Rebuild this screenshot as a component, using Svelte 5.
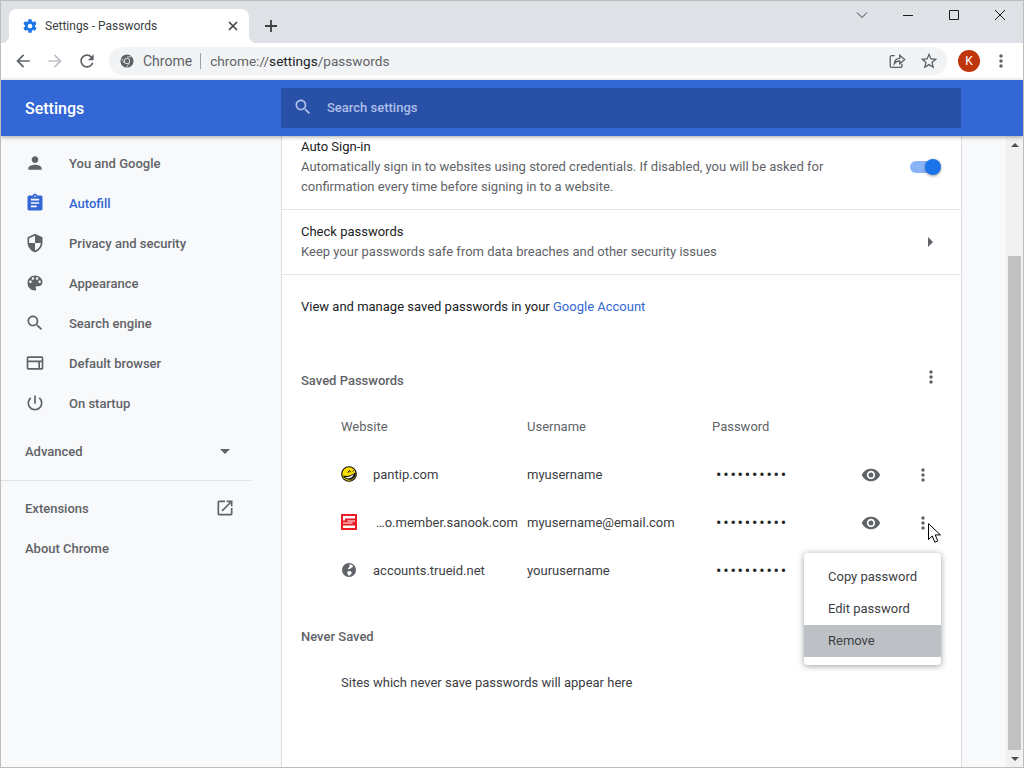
<script>
  const icons = {
    person: 'M12 12c2.21 0 4-1.79 4-4s-1.79-4-4-4-4 1.79-4 4 1.79 4 4 4zm0 2c-2.67 0-8 1.34-8 4v2h16v-2c0-2.66-5.33-4-8-4z',
    autofill: 'M19 3h-4.18C14.4 1.84 13.3 1 12 1c-1.3 0-2.4.84-2.82 2H5c-1.1 0-2 .9-2 2v14c0 1.1.9 2 2 2h14c1.1 0 2-.9 2-2V5c0-1.1-.9-2-2-2zm-7 0c.55 0 1 .45 1 1s-.45 1-1 1-1-.45-1-1 .45-1 1-1zm2 14H7v-2h7v2zm3-4H7v-2h10v2zm0-4H7V7h10v2z',
    shield: 'M12 1L3 5v6c0 5.55 3.84 10.74 9 12 5.16-1.26 9-6.45 9-12V5l-9-4zm0 10.99h7c-.53 4.12-3.28 7.79-7 8.94V12H5V6.3l7-3.11v8.8z',
    palette: 'M12 3c-4.97 0-9 4.03-9 9s4.03 9 9 9c.83 0 1.5-.67 1.5-1.5 0-.39-.15-.74-.39-1.01-.23-.26-.38-.61-.38-.99 0-.83.67-1.5 1.5-1.5H16c2.76 0 5-2.24 5-5 0-4.42-4.03-8-9-8zm-5.5 9c-.83 0-1.5-.67-1.5-1.5S5.67 9 6.5 9 8 9.67 8 10.5 7.33 12 6.5 12zm3-4C8.67 8 8 7.33 8 6.5S8.67 5 9.5 5s1.5.67 1.5 1.5S10.33 8 9.5 8zm5 0c-.83 0-1.5-.67-1.5-1.5S13.67 5 14.5 5s1.5.67 1.5 1.5S15.33 8 14.5 8zm3 4c-.83 0-1.5-.67-1.5-1.5S16.67 9 17.5 9s1.5.67 1.5 1.5-.67 1.5-1.5 1.5z',
    search: 'M15.5 14h-.79l-.28-.27C15.41 12.59 16 11.11 16 9.5 16 5.91 13.09 3 9.5 3S3 5.91 3 9.5 5.91 16 9.5 16c1.61 0 3.09-.59 4.23-1.57l.27.28v.79l5 4.99L20.49 19l-4.99-5zm-6 0C7.01 14 5 11.99 5 9.5S7.01 5 9.5 5 14 7.01 14 9.5 11.99 14 9.5 14z',
    browser: 'M20 4H4c-1.1 0-2 .9-2 2v12c0 1.1.9 2 2 2h16c1.1 0 2-.9 2-2V6c0-1.1-.9-2-2-2zM4 18v-7h12v7H4zm16 0h-2v-7h2v7zm0-9H4V6h16v3z',
    power: 'M13 3h-2v10h2V3zm4.83 2.17l-1.42 1.42C17.99 7.86 19 9.81 19 12c0 3.87-3.13 7-7 7s-7-3.13-7-7c0-2.19 1.01-4.14 2.58-5.42L6.17 5.17C4.23 6.82 3 9.26 3 12c0 4.97 4.03 9 9 9s9-4.03 9-9c0-2.74-1.23-5.18-3.17-6.83z',
    external: 'M19 19H5V5h7V3H5c-1.11 0-2 .9-2 2v14c0 1.1.89 2 2 2h14c1.1 0 2-.9 2-2v-7h-2v7zM14 3v2h3.59l-9.83 9.83 1.41 1.41L19 6.41V10h2V3h-7z',
    eye: 'M12 4.5C7 4.5 2.73 7.61 1 12c1.73 4.39 6 7.5 11 7.5s9.27-3.11 11-7.5c-1.73-4.39-6-7.5-11-7.5zM12 17c-2.76 0-5-2.24-5-5s2.24-5 5-5 5 2.24 5 5-2.24 5-5 5zm0-8c-1.66 0-3 1.34-3 3s1.34 3 3 3 3-1.34 3-3-1.34-3-3-3z',
    more: 'M12 8c1.1 0 2-.9 2-2s-.9-2-2-2-2 .9-2 2 .9 2 2 2zm0 2c-1.1 0-2 .9-2 2s.9 2 2 2 2-.9 2-2-.9-2-2-2zm0 6c-1.1 0-2 .9-2 2s.9 2 2 2 2-.9 2-2-.9-2-2-2z',
    gear: 'M19.43 12.98c.04-.32.07-.64.07-.98s-.03-.66-.07-.98l2.11-1.65c.19-.15.24-.42.12-.64l-2-3.46c-.12-.22-.39-.3-.61-.22l-2.49 1c-.52-.4-1.08-.73-1.69-.98l-.38-2.65C14.46 2.18 14.25 2 14 2h-4c-.25 0-.46.18-.49.42l-.38 2.65c-.61.25-1.17.59-1.69.98l-2.49-1c-.23-.09-.49 0-.61.22l-2 3.46c-.13.22-.07.49.12.64l2.11 1.65c-.04.32-.07.65-.07.98s.03.66.07.98l-2.11 1.65c-.19.15-.24.42-.12.64l2 3.46c.12.22.39.3.61.22l2.49-1c.52.4 1.08.73 1.69.98l.38 2.65c.03.24.24.42.49.42h4c.25 0 .46-.18.49-.42l.38-2.65c.61-.25 1.17-.59 1.69-.98l2.49 1c.23.09.49 0 .61-.22l2-3.46c.12-.22.07-.49-.12-.64l-2.11-1.65zM12 15.5c-1.93 0-3.5-1.57-3.5-3.5s1.57-3.5 3.5-3.5 3.5 1.57 3.5 3.5-1.57 3.5-3.5 3.5z',
    star: 'M22 9.24l-7.19-.62L12 2 9.19 8.63 2 9.24l5.46 4.73L5.82 21 12 17.27 18.18 21l-1.63-7.03L22 9.24zM12 15.4l-3.76 2.27 1-4.28-3.32-2.88 4.38-.38L12 6.1l1.71 4.04 4.38.38-3.32 2.88 1 4.28L12 15.4z'
  };

  const navItems = [
    { label: 'You and Google', icon: 'person' },
    { label: 'Autofill', icon: 'autofill', active: true },
    { label: 'Privacy and security', icon: 'shield' },
    { label: 'Appearance', icon: 'palette' },
    { label: 'Search engine', icon: 'search' },
    { label: 'Default browser', icon: 'browser' },
    { label: 'On startup', icon: 'power' }
  ];

  const passwords = [
    { site: 'pantip.com', user: 'myusername', favicon: 'smile', eye: true, more: true },
    { site: '…o.member.sanook.com', user: 'myusername@email.com', favicon: 'sanook', eye: true, more: true },
    { site: 'accounts.trueid.net', user: 'yourusername', favicon: 'globe' }
  ];
</script>

<div class="window">
  <div class="tabstrip">
    <div class="tab">
      <svg class="tab-icon" viewBox="0 0 24 24" width="16" height="16"><path d={icons.gear} /></svg>
      <span class="tab-title">Settings - Passwords</span>
      <svg class="tab-close" viewBox="0 0 10 10" width="10" height="10"><path d="M1 1l8 8M9 1l-8 8" /></svg>
    </div>
    <svg class="new-tab" viewBox="0 0 14 14" width="14" height="14"><path d="M7 1v12M1 7h12" /></svg>
    <div class="win-controls">
      <div class="win-btn"><svg viewBox="0 0 12 12" width="12" height="12"><path d="M1 3.500l5 5 5-5" /></svg></div>
      <div class="win-btn"><svg viewBox="0 0 12 12" width="12" height="12"><path d="M1 6.500h10" /></svg></div>
      <div class="win-btn"><svg viewBox="0 0 12 12" width="12" height="12"><path d="M1.500 1.500h9v9h-9z" /></svg></div>
      <div class="win-btn"><svg viewBox="0 0 12 12" width="12" height="12"><path d="M1 1l10 10M11 1L1 11" /></svg></div>
    </div>
  </div>

  <div class="toolbar">
    <div class="tool"><svg viewBox="0 0 24 24" width="20" height="20"><path class="gfill" d="M20 11H7.830l5.590-5.590L12 4l-8 8 8 8 1.410-1.410L7.830 13H20v-2z" /></svg></div>
    <div class="tool"><svg viewBox="0 0 24 24" width="20" height="20"><path class="dim" d="M4 11h12.170l-5.590-5.590L12 4l8 8-8 8-1.410-1.410L16.170 13H4v-2z" /></svg></div>
    <div class="tool"><svg viewBox="0 0 24 24" width="20" height="20"><path class="gfill" d="M17.650 6.350C16.200 4.900 14.210 4 12 4c-4.420 0-7.990 3.580-7.990 8s3.570 8 7.990 8c3.730 0 6.840-2.550 7.730-6h-2.080c-.82 2.330-3.040 4-5.650 4-3.310 0-6-2.690-6-6s2.690-6 6-6c1.660 0 3.140.69 4.220 1.780L13 11h7V4l-2.350 2.350z" /></svg></div>
    <div class="omnibox">
      <svg class="chrome-logo" viewBox="0 0 16 16" width="14" height="14">
        <circle cx="8" cy="8" r="7.500" fill="#5f6368" />
        <path d="M8 3.200h6.200M5 10.500L2 5.200M10.600 10L7.600 15" stroke="#f1f3f4" stroke-width="0.8" fill="none" />
        <circle cx="8" cy="8" r="3.400" fill="#f1f3f4" />
        <circle cx="8" cy="8" r="2.500" fill="#5f6368" />
      </svg>
      <span class="origin">Chrome</span>
      <span class="sep"></span>
      <span class="url">chrome://<b>settings</b>/passwords</span>
      <div class="omni-tool first">
        <svg viewBox="0 0 20 20" width="18" height="18" fill="none" stroke="#5f6368" stroke-width="1.500">
          <path d="M7.500 4H4A1.500 1.500 0 0 0 2.500 5.500v10A1.500 1.500 0 0 0 4 17h10a1.500 1.500 0 0 0 1.500-1.500V13" />
          <path d="M7 13c.3-3.600 2.700-6 6-6V3.600L18.500 8.400 13 13.200V10c-2.600 0-4.600 1-6 3z" />
        </svg>
      </div>
      <div class="omni-tool"><svg viewBox="0 0 24 24" width="20" height="20"><path class="gfill" d={icons.star} /></svg></div>
    </div>
    <div class="avatar">K</div>
    <div class="tool menu-tool"><svg viewBox="0 0 24 24" width="20" height="20"><path class="gfill" d={icons.more} /></svg></div>
  </div>

  <header class="bluebar">
    <h1>Settings</h1>
    <div class="searchbox">
      <svg viewBox="0 0 24 24" width="20" height="20"><path d={icons.search} /></svg>
      <span>Search settings</span>
    </div>
  </header>

  <div class="page">
    <nav class="sidebar">
      {#each navItems as item}
        <div class="nav-item" class:active={item.active}>
          <svg viewBox="0 0 24 24" width="20" height="20"><path d={icons[item.icon]} /></svg>
          <span>{item.label}</span>
        </div>
      {/each}
      <div class="nav-plain advanced">
        <span>Advanced</span>
        <svg class="caret" viewBox="0 0 10 5" width="10" height="5"><path d="M0 0h10L5 5z" /></svg>
      </div>
      <div class="nav-divider"></div>
      <div class="nav-plain">
        <span>Extensions</span>
        <svg viewBox="0 0 24 24" width="20" height="20"><path d={icons.external} /></svg>
      </div>
      <div class="nav-plain"><span>About Chrome</span></div>
    </nav>

    <main class="card">
      <section class="setting signin">
        <div>
          <div class="setting-title">Auto Sign-in</div>
          <div class="setting-sub">Automatically sign in to websites using stored credentials. If disabled, you will be asked for<br />confirmation every time before signing in to a website.</div>
        </div>
        <div class="toggle"><span class="knob"></span></div>
      </section>

      <section class="setting check">
        <div>
          <div class="setting-title">Check passwords</div>
          <div class="setting-sub">Keep your passwords safe from data breaches and other security issues</div>
        </div>
        <svg class="chevron" viewBox="0 0 5 10" width="5" height="10"><path d="M0 0l5 5-5 5z" /></svg>
      </section>

      <p class="manage">View and manage saved passwords in your <a href="#top">Google Account</a></p>

      <div class="saved-head">
        <h2>Saved Passwords</h2>
        <svg viewBox="0 0 24 24" width="20" height="20"><path d={icons.more} /></svg>
      </div>

      <div class="pw-row pw-header">
        <span>Website</span>
        <span>Username</span>
        <span>Password</span>
      </div>
      {#each passwords as row}
        <div class="pw-row">
          <span class="site">
            {#if row.favicon === 'smile'}
              <svg viewBox="0 0 16 16" width="16" height="16">
                <circle cx="8" cy="8" r="7.300" fill="#fde000" stroke="#111" stroke-width="1.100" />
                <path d="M1.800 9.600C6 10.800 11 9.400 14.600 6.200c.6 4.200-2 7.600-6 7.600-3 0-5.800-1.600-6.800-4.200z" fill="#111" />
                <path d="M4.200 11.200c2.900.1 5.900-1 8.600-3-.3 1.700-2.600 4-5.600 4.200-1.200 0-2.400-.5-3-1.200z" fill="#fff" />
                <path d="M6.800 6.800l1.600-2.400 1.400 2M11.800 5.600l.7-1.300" fill="none" stroke="#111" stroke-width="1" />
              </svg>
            {:else if row.favicon === 'sanook'}
              <svg viewBox="0 0 16 16" width="16" height="16">
                <rect width="16" height="16" fill="#ed1c24" />
                <rect x="2" y="2" width="12" height="12" fill="#fff" />
                <path d="M0 6.500h4V4.500h10v2H6.500v1H14v4H2v-2h9.500v-1H0z" fill="#ed1c24" />
              </svg>
            {:else}
              <svg viewBox="0 0 16 16" width="16" height="16">
                <circle cx="8" cy="8" r="7" fill="#5f6368" />
                <path d="M8.500 2.200c2 .3 3.400 1.400 3.600 2.300-.6 1.400-2.200 1.500-3.100 2.300-.7.600-1.700.4-2.300-.2 1-.8 2.100-1.900 1.800-4.400zM7.500 9c1.700-.4 3 .4 3.300 1.800-.5 1.500-1.700 2.500-3 3-.7-.8-1-1.500-1.400-2.300-.4-.9 0-2 1.100-2.500z" fill="#fff" />
              </svg>
            {/if}
            <span class="site-name" class:elided={row.favicon === 'sanook'}>{row.site}</span>
          </span>
          <span class="user">{row.user}</span>
          <span class="dots">••••••••••</span>
          <span class="eye">
            {#if row.eye}
              <svg viewBox="0 0 24 24" width="20" height="20"><path d={icons.eye} /></svg>
            {/if}
          </span>
          <span class="more">
            {#if row.more}
              <svg viewBox="0 0 24 24" width="20" height="20"><path d={icons.more} /></svg>
            {/if}
          </span>
        </div>
      {/each}

      <h2 class="never">Never Saved</h2>
      <p class="never-note">Sites which never save passwords will appear here</p>
    </main>

    <div class="gutter"></div>

    <div class="scrollbar">
      <div class="arrow"><svg viewBox="0 0 8 4" width="8" height="4"><path d="M0 4L4 0l4 4z" /></svg></div>
      <div class="thumb"></div>
      <div class="arrow"><svg viewBox="0 0 8 4" width="8" height="4"><path d="M0 0l4 4 4-4z" /></svg></div>
    </div>
  </div>

  <div class="popup">
    <div class="popup-item">Copy password</div>
    <div class="popup-item">Edit password</div>
    <div class="popup-item hover">Remove</div>
  </div>

  <svg class="cursor" viewBox="0 0 14 21" width="14" height="21">
    <path d="M.5.700v15.800l3.800-3.500 2.500 6.200 3-1.300-2.600-6h5.200z" fill="#fff" stroke="#000" stroke-width="1" />
  </svg>
</div>

<style>
  :global(body) {
    margin: 0;
  }

  .window {
    position: relative;
    display: flex;
    flex-direction: column;
    box-sizing: border-box;
    width: 1024px;
    height: 768px;
    overflow: hidden;
    border: 1px solid #bdbdbd;
    font-family: Roboto, "Liberation Sans", sans-serif;
    font-size: 13px;
    color: #202124;
    background: #f8f9fa;
  }

  .tabstrip {
    display: flex;
    align-items: flex-end;
    flex: none;
    height: 42px;
    padding-left: 8px;
    background: #dee1e6;
  }

  .tab {
    position: relative;
    display: flex;
    align-items: center;
    box-sizing: border-box;
    width: 240px;
    height: 34px;
    padding: 0 11px 0 13px;
    background: #fff;
    border-radius: 8px 8px 0 0;
  }

  .tab::before,
  .tab::after {
    content: '';
    position: absolute;
    bottom: 0;
    width: 8px;
    height: 8px;
  }

  .tab::before {
    left: -8px;
    background: radial-gradient(circle at 0 0, transparent 8px, #fff 8.5px);
  }

  .tab::after {
    right: -8px;
    background: radial-gradient(circle at 100% 0, transparent 8px, #fff 8.5px);
  }

  .tab-icon {
    flex: none;
    fill: #1a73e8;
  }

  .tab-title {
    flex: 1;
    margin-left: 7px;
    font-size: 12px;
    color: #3c4043;
  }

  .tab-close {
    fill: none;
    stroke: #3c4043;
    stroke-width: 1.6;
  }

  .new-tab {
    margin: 0 0 10px 15px;
    fill: none;
    stroke: #3c4043;
    stroke-width: 1.8;
  }

  .win-controls {
    display: flex;
    align-self: flex-start;
    margin-left: auto;
  }

  .win-btn {
    display: flex;
    align-items: center;
    justify-content: center;
    width: 46px;
    height: 28px;
  }

  .win-btn svg {
    fill: none;
    stroke: #1b1b1b;
    stroke-width: 1;
  }

  .win-btn:first-child svg {
    stroke: #3c4043;
  }

  .toolbar {
    display: flex;
    align-items: center;
    flex: none;
    box-sizing: border-box;
    height: 37px;
    padding: 0 0 1px 6px;
    background: #fff;
  }

  .tool {
    display: flex;
    align-items: center;
    justify-content: center;
    width: 32px;
    height: 28px;
  }

  .gfill {
    fill: #5f6368;
  }

  .dim {
    fill: #bdc1c6;
  }

  .omnibox {
    display: flex;
    align-items: center;
    box-sizing: border-box;
    width: 838px;
    height: 28px;
    margin-left: 6px;
    padding: 0 2px 0 11px;
    background: #f1f3f4;
    border-radius: 14px;
    font-size: 14px;
    color: #5f6368;
  }

  .chrome-logo {
    flex: none;
  }

  .origin {
    margin-left: 9px;
  }

  .sep {
    width: 1px;
    height: 16px;
    margin: 0 9px 0 8px;
    background: #9aa0a6;
  }

  .url {
    font-size: 13.6px;
  }

  .url b {
    font-weight: 400;
    color: #202124;
  }

  .omni-tool {
    display: flex;
    align-items: center;
    justify-content: center;
    width: 32px;
    height: 28px;
  }

  .omni-tool.first {
    margin-left: auto;
  }

  .avatar {
    display: flex;
    align-items: center;
    justify-content: center;
    width: 22px;
    height: 22px;
    margin-left: 11px;
    border-radius: 50%;
    background: #bf360c;
    color: #fff;
    font-size: 12px;
  }

  .menu-tool {
    margin-left: 5px;
  }

  .bluebar {
    position: relative;
    z-index: 2;
    display: flex;
    align-items: center;
    flex: none;
    height: 56px;
    background: #3367d6;
    box-shadow: 0 1px 4px rgba(0, 0, 0, 0.35);
  }

  .bluebar h1 {
    box-sizing: border-box;
    width: 280px;
    margin: 0;
    padding-left: 24px;
    font-size: 16px;
    font-weight: 500;
    color: #fff;
  }

  .searchbox {
    display: flex;
    align-items: center;
    box-sizing: border-box;
    width: 680px;
    height: 40px;
    padding: 0 0 2px 12px;
    background: #2850a7;
    border-radius: 2px;
    color: #aebfe8;
    font-weight: 500;
  }

  .searchbox svg {
    fill: #aebfe8;
    margin-right: 14px;
  }

  .page {
    display: flex;
    flex: 1;
    min-height: 0;
  }

  .sidebar {
    flex: none;
    width: 280px;
    padding-top: 7px;
    font-weight: 500;
    color: #5f6368;
  }

  .nav-item {
    display: flex;
    align-items: center;
    height: 40px;
    padding-left: 24px;
  }

  .nav-item svg {
    flex: none;
    margin-right: 24px;
    fill: #5f6368;
  }

  .nav-item.active {
    color: #3367d6;
  }

  .nav-item.active svg {
    fill: #3367d6;
  }

  .nav-plain {
    display: flex;
    align-items: center;
    justify-content: space-between;
    box-sizing: border-box;
    width: 250px;
    height: 40px;
    padding: 0 16px 0 24px;
  }

  .nav-plain svg {
    fill: #5f6368;
  }

  .advanced {
    margin-top: 8px;
  }

  .caret {
    margin-right: 5px;
  }

  .nav-divider {
    width: 250px;
    height: 1px;
    margin: 9px 0 7px;
    background: #e0e2e6;
  }

  .card {
    flex: none;
    box-sizing: border-box;
    width: 681px;
    background: #fff;
    border-left: 1px solid #dadce0;
    border-right: 1px solid #dadce0;
  }

  .setting {
    display: flex;
    align-items: center;
    justify-content: space-between;
    box-sizing: border-box;
    padding: 0 20px 0 19px;
    line-height: 20px;
    border-bottom: 1px solid #e4e6e9;
  }

  .signin {
    height: 74px;
    padding-top: 1px;
    align-items: flex-start;
  }

  .check {
    height: 65px;
  }

  .setting-title {
    color: #202124;
  }

  .setting-sub {
    color: #5f6368;
  }

  .toggle {
    position: relative;
    width: 29px;
    height: 12px;
    margin: 24px 2px 0 0;
    background: #8ab4f8;
    border-radius: 6px;
  }

  .knob {
    position: absolute;
    top: -2px;
    right: -2px;
    width: 16px;
    height: 16px;
    background: #1a73e8;
    border-radius: 50%;
    box-shadow: 0 1px 3px rgba(0, 0, 0, 0.4);
  }

  .chevron {
    margin-right: 8px;
    fill: #5f6368;
  }

  .manage {
    margin: 22px 0 0;
    padding-left: 19px;
    line-height: 20px;
    color: #202124;
  }

  .manage a {
    color: #3367d6;
    text-decoration: none;
  }

  .saved-head {
    display: flex;
    justify-content: space-between;
    align-items: flex-start;
    height: 35px;
    margin-top: 50px;
    padding: 0 20px 0 19px;
  }

  h2 {
    margin: 0;
    font-size: 13px;
    font-weight: 500;
    line-height: 20px;
    color: #5f6368;
  }

  .saved-head h2 {
    margin-top: 4px;
  }

  .saved-head svg {
    fill: #5f6368;
  }

  .pw-row {
    display: grid;
    grid-template-columns: 186px 189px 129px 52px 52px;
    align-items: center;
    height: 48px;
    padding-left: 59px;
    color: #3c4043;
  }

  .pw-header {
    grid-template-columns: 186px 185px 1fr;
    color: #5f6368;
  }

  .site {
    display: flex;
    align-items: center;
  }

  .site svg {
    flex: none;
    margin-right: 16px;
  }

  .site-name.elided {
    margin-left: 3px;
  }

  .dots {
    font-size: 16px;
    letter-spacing: 1.8px;
    color: #202124;
  }

  .eye,
  .more {
    display: flex;
    justify-content: center;
    height: 20px;
    margin-top: 2px;
  }

  .eye svg,
  .more svg {
    fill: #5f6368;
  }

  .never {
    margin: 33px 0 0 19px;
  }

  .never-note {
    margin: 26px 0 0 59px;
    line-height: 20px;
    color: #3c4043;
  }

  .gutter {
    flex: none;
    width: 44px;
  }

  .scrollbar {
    display: flex;
    flex-direction: column;
    flex: none;
    width: 17px;
    background: #f1f1f1;
  }

  .arrow {
    display: flex;
    align-items: center;
    justify-content: center;
    flex: none;
    height: 17px;
  }

  .arrow svg {
    fill: #505050;
  }

  .thumb {
    flex: none;
    height: 494px;
    margin: 103px 2px 0;
    background: #c1c1c1;
  }

  .popup {
    position: absolute;
    top: 552px;
    left: 803px;
    width: 137px;
    padding: 8px 0;
    background: #fff;
    border-radius: 4px;
    box-shadow: 0 1px 6px rgba(60, 64, 67, 0.5);
    z-index: 3;
  }

  .popup-item {
    height: 32px;
    padding-left: 24px;
    line-height: 32px;
    color: #3c4043;
  }

  .popup-item.hover {
    background: #bdc1c6;
  }

  .cursor {
    position: absolute;
    top: 522px;
    left: 927px;
    z-index: 4;
  }
</style>
